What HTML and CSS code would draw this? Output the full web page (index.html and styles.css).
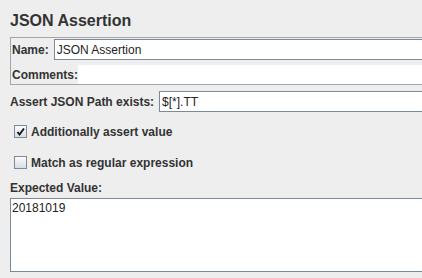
FILE: index.html
```html
<!DOCTYPE html>
<html>

<head>
	<title>JSON Assertion</title>
	<meta charset="utf-8" />
	<link rel="stylesheet" href="styles.css">
</head>

<body>
	<div class="page">
		<h1 class="title">JSON Assertion</h1>
		<div class="panel">
			<div class="row">
				<label class="lbl lbl-name" for="inpName">Name:</label>
				<input type="text" id="inpName" class="field" value="JSON Assertion">
			</div>
			<div class="row row-comments">
				<label class="lbl" for="inpComments">Comments:</label>
				<input type="text" id="inpComments" class="field field-plain" value="">
			</div>
		</div>
		<div class="row row-path">
			<label class="lbl lbl-path" for="inpPath">Assert JSON Path exists:</label>
			<input type="text" id="inpPath" class="field" value="$[*].TT">
		</div>
		<label class="check check-first">
			<span class="box">
				<svg width="11" height="11" viewBox="0 0 11 11">
					<polyline points="2.5,6 4.5,8.5 9,2.5" fill="none" stroke="#111" stroke-width="1.8" />
				</svg>
			</span>
			Additionally assert value
		</label>
		<label class="check check-second">
			<span class="box"></span>
			Match as regular expression
		</label>
		<p class="lbl lbl-expected">Expected Value:</p>
		<textarea class="value">20181019</textarea>
	</div>
</body>

</html>
```

FILE: styles.css
```css
/* general styles */
html,
body {
	margin: 0;
	overflow: hidden;
}

body {
	background-color: #eeeeee;
	color: #333333;
	font-family: "Liberation Sans", Arial, sans-serif;
	font-size: 12px;
}

* {
	box-sizing: border-box;
}

.page {
	padding-left: 10px;
}

.title {
	margin: 0 0 6px 0;
	padding-top: 11px;
	font-size: 16px;
	line-height: 20px;
	font-weight: bold;
}

/* name / comments block (runs on past the window's right edge) */
.panel {
	border: 1px solid #a5a5a5;
	border-right: none;
	padding: 1px 0 0 1px;
}

.row {
	display: flex;
	align-items: center;
}

.lbl {
	font-weight: bold;
	line-height: 14px;
	white-space: nowrap;
}

.lbl-name {
	margin-right: 5px;
}

.row-comments {
	margin-top: 5px;
}

.field {
	flex: 1;
	min-width: 0;
	height: 21px;
	margin: 0;
	padding: 0 2px;
	border: 1px solid #7a8a99;
	border-right: none;
	background-color: #fff;
	color: #222;
	font-family: inherit;
	font-size: 12px;
	outline: none;
}

.field-plain {
	height: 19px;
	border: none;
}

.row-path {
	margin-top: 6px;
}

.lbl-path {
	margin-right: 5px;
}

/* checkboxes */
.check {
	display: flex;
	align-items: center;
	height: 13px;
	padding-left: 4px;
	font-weight: bold;
}

.check-first {
	margin-top: 13px;
}

.check-second {
	margin-top: 18px;
}

.box {
	display: flex;
	align-items: center;
	justify-content: center;
	width: 13px;
	height: 13px;
	margin-right: 4px;
	border: 1px solid #7a8a99;
	background: linear-gradient(#fbfcfd, #d5dde6);
}

.lbl-expected {
	margin: 12px 0 3px 0;
}

.value {
	display: block;
	width: 100%;
	height: 74px;
	margin: 0;
	padding: 2px 0 0 1px;
	border: 1px solid #7a8a99;
	border-right: none;
	background-color: #fff;
	color: #222;
	font-family: inherit;
	font-size: 12px;
	line-height: 14px;
	resize: none;
	outline: none;
}
```
